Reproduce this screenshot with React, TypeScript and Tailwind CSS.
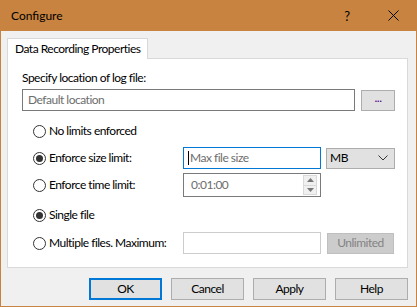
import React from "react";

// 標準のラジオボタン
function Radio({ checked, label }: { checked?: boolean; label: string }) {
  return (
    <div className="flex w-[150px] items-center whitespace-nowrap">
      <span className="flex h-[13px] w-[13px] shrink-0 items-center justify-center rounded-full border border-[#333333] bg-white">
        {checked && <span className="h-[7px] w-[7px] rounded-full bg-[#333333]" />}
      </span>
      <span className="ml-[3px] text-black">{label}</span>
    </div>
  );
}

function DialogButton({ label, focused }: { label: string; focused?: boolean }) {
  return (
    <button
      type="button"
      className={
        focused
          ? "flex h-[22px] w-[73px] items-center justify-center border-2 border-[#0078d7] bg-[#e1e1e1] text-black"
          : "flex h-[22px] w-[73px] items-center justify-center border border-[#adadad] bg-[#e1e1e1] text-black"
      }
    >
      {label}
    </button>
  );
}

export default function App() {
  return (
    <div
      className="flex h-[307px] w-[417px] flex-col border-x border-b border-[#c7833f] bg-[#f0f0f0] text-[12px] leading-[16px] tracking-[-0.5px] whitespace-nowrap"
      style={{ fontFamily: '"Segoe UI", Lato, sans-serif' }}
    >
      {/* タイトルバー */}
      <div className="flex h-[31px] shrink-0 items-center bg-[#c7833f] pl-[10px]">
        <span className="flex-1 text-[12px] tracking-normal text-black">Configure</span>
        <span className="mr-[38px] text-[13px] tracking-normal text-black">?</span>
        <svg width="11" height="11" viewBox="0 0 11 11" className="mr-[17px]">
          <path d="M0.5 0.5 L10.5 10.5 M10.5 0.5 L0.5 10.5" stroke="#000" strokeWidth="1" />
        </svg>
      </div>

      <div className="flex flex-col pl-[6px] pr-[8px] pt-[7px]">
        {/* タブ */}
        <div className="relative z-10 -mb-px flex h-[21px] w-[141px] items-center border-x border-t border-[#d9d9d9] bg-white pl-[7px] text-black">
          Data Recording Properties
        </div>

        {/* パネル */}
        <div className="flex h-[210px] w-[401px] flex-col border border-[#d9d9d9] bg-white pl-[14px] pt-[11px]">
          <div className="text-black">Specify location of log file:</div>
          <div className="mt-[3px] flex items-center">
            <div className="flex h-[22px] w-[333px] items-center border border-[#7a7a7a] pl-[5px] text-[#6d6d6d]">
              Default location
            </div>
            <button
              type="button"
              className="ml-[6px] flex h-[21px] w-[34px] items-center justify-center border border-[#adadad] bg-[#e1e1e1] pb-[4px] text-[#4b0082]"
            >
              ...
            </button>
          </div>

          <div className="flex flex-col pl-[11px]">
            <div className="mt-[9px] flex h-[22px] items-center">
              <Radio label="No limits enforced" />
            </div>

            <div className="mt-[5px] flex h-[22px] items-center">
              <Radio checked label="Enforce size limit:" />
              <div className="flex h-[22px] w-[138px] items-center border border-[#0078d7] pl-[4px] text-[#6d6d6d]">
                <span className="mr-[1px] h-[14px] w-px bg-black" />
                Max file size
              </div>
              <div className="ml-[5px] flex h-[21px] w-[69px] items-center justify-between border border-[#adadad] bg-[#e1e1e1] pl-[3px] pr-[6px] text-black">
                MB
                <svg width="10" height="6" viewBox="0 0 10 6">
                  <path d="M0.5 0.5 L5 5 L9.5 0.5" fill="none" stroke="#333" strokeWidth="1" />
                </svg>
              </div>
            </div>

            <div className="mt-[4px] flex h-[24px] items-center">
              <Radio label="Enforce time limit:" />
              <div className="flex h-[24px] w-[138px] items-center justify-between border border-[#7a7a7a] pl-[7px] pr-[3px] text-[#6d6d6d]">
                0:01:00
                <div className="flex h-[20px] w-[14px] flex-col">
                  <div className="flex flex-1 items-center justify-center border border-[#d9d9d9] bg-[#f0f0f0]">
                    <svg width="7" height="4" viewBox="0 0 7 4">
                      <path d="M0 4 L3.5 0 L7 4 Z" fill="#777" />
                    </svg>
                  </div>
                  <div className="flex flex-1 items-center justify-center border border-t-0 border-[#d9d9d9] bg-[#f0f0f0]">
                    <svg width="7" height="4" viewBox="0 0 7 4">
                      <path d="M0 0 L3.5 4 L7 0 Z" fill="#777" />
                    </svg>
                  </div>
                </div>
              </div>
            </div>

            <div className="mt-[7px] flex h-[22px] items-center">
              <Radio checked label="Single file" />
            </div>

            <div className="mt-[6px] flex h-[22px] items-center">
              <Radio label="Multiple files. Maximum:" />
              <div className="h-[22px] w-[138px] border border-[#cccccc]" />
              <div className="ml-[6px] flex h-[21px] w-[67px] items-center justify-center border border-[#bfbfbf] bg-[#cccccc] text-[#838383]">
                Unlimited
              </div>
            </div>
          </div>
        </div>

        {/* 下部ボタン */}
        <div className="mt-[10px] flex justify-end gap-[9px]">
          <DialogButton focused label="OK" />
          <DialogButton label="Cancel" />
          <DialogButton label="Apply" />
          <DialogButton label="Help" />
        </div>
      </div>
    </div>
  );
}
